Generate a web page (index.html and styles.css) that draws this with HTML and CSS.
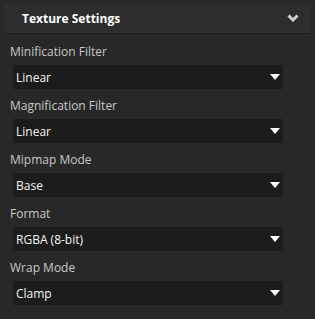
FILE: index.html
```html
<!DOCTYPE html>
<html>
<head>
  <title>Texture Settings</title>
  <link rel="stylesheet" href="styles.css">
</head>
<body>
  <div class="panel">
    <div class="panel-header">
      <span class="panel-title">Texture Settings</span>
      <svg class="chevron" width="12" height="8" viewBox="0 0 12 8">
        <path d="M1.5 1.5 L6 6 L10.5 1.5" fill="none" stroke="#d0d0d0" stroke-width="3"/>
      </svg>
    </div>

    <div class="panel-body">
      <div class="field">
        <div class="field-label">Minification Filter</div>
        <div class="select">
          <span>Linear</span>
          <svg class="caret" width="10" height="6" viewBox="0 0 10 6"><polygon points="0,0 10,0 5,6" fill="#fff"/></svg>
        </div>
      </div>
      <div class="field">
        <div class="field-label">Magnification Filter</div>
        <div class="select">
          <span>Linear</span>
          <svg class="caret" width="10" height="6" viewBox="0 0 10 6"><polygon points="0,0 10,0 5,6" fill="#fff"/></svg>
        </div>
      </div>
      <div class="field">
        <div class="field-label">Mipmap Mode</div>
        <div class="select">
          <span>Base</span>
          <svg class="caret" width="10" height="6" viewBox="0 0 10 6"><polygon points="0,0 10,0 5,6" fill="#fff"/></svg>
        </div>
      </div>
      <div class="field">
        <div class="field-label">Format</div>
        <div class="select">
          <span>RGBA (8-bit)</span>
          <svg class="caret" width="10" height="6" viewBox="0 0 10 6"><polygon points="0,0 10,0 5,6" fill="#fff"/></svg>
        </div>
      </div>
      <div class="field">
        <div class="field-label">Wrap Mode</div>
        <div class="select">
          <span>Clamp</span>
          <svg class="caret" width="10" height="6" viewBox="0 0 10 6"><polygon points="0,0 10,0 5,6" fill="#fff"/></svg>
        </div>
      </div>
    </div>
  </div>
</body>
</html>
```

FILE: styles.css
```css
body {
  margin: 0;
  background-color: #282828;
  font-family: "Open Sans", "Noto Sans", sans-serif;
  font-size: 12px;
  color: #c8c8c8;
}

.panel {
  padding-top: 3px;
}

.panel-header {
  display: flex;
  align-items: center;
  justify-content: space-between;
  height: 30px;
  margin: 0 4px;
  padding: 0 12px 0 18px;
  background-color: #2d2d2d;
  border-bottom: 1px solid #1e1e1e;
}

.panel-title {
  color: #fff;
  font-weight: bold;
}

.chevron {
  display: block;
}

.panel-body {
  padding: 9px 0 0 10px;
}

.field {
  margin-bottom: 8px;
}

.field-label {
  height: 18px;
  line-height: 18px;
  margin-bottom: 4px;
}

.select {
  display: flex;
  align-items: center;
  justify-content: space-between;
  width: 270px;
  height: 24px;
  margin-left: 3px;
  padding: 0 3px 0 3px;
  box-sizing: border-box;
  background-color: #1c1c1c;
  color: #f4f4f4;
}

.caret {
  display: block;
}
```
